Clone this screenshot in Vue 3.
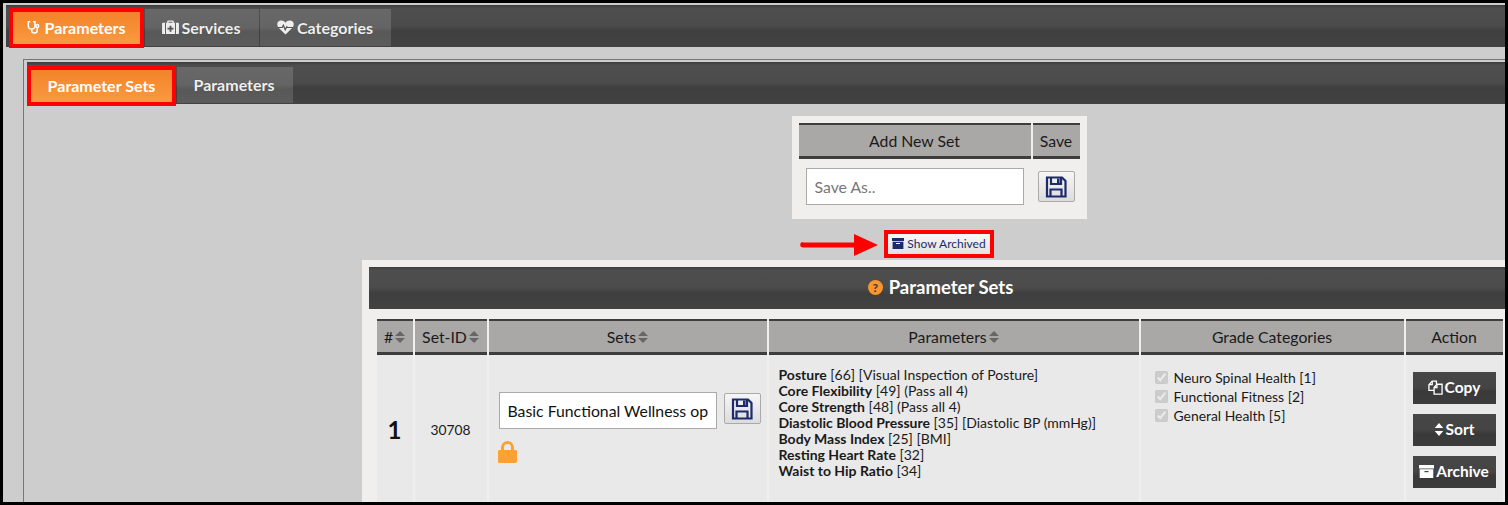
<script setup>
const params = [
  ['Posture', '[66] [Visual Inspection of Posture]'],
  ['Core Flexibility', '[49] (Pass all 4)'],
  ['Core Strength', '[48] (Pass all 4)'],
  ['Diastolic Blood Pressure', '[35] [Diastolic BP (mmHg)]'],
  ['Body Mass Index', '[25] [BMI]'],
  ['Resting Heart Rate', '[32]'],
  ['Waist to Hip Ratio', '[34]'],
]
const grades = ['Neuro Spinal Health [1]', 'Functional Fitness [2]', 'General Health [5]']
</script>

<template>
  <div class="frame">
    <div class="bar top-bar">
      <div class="tab active main-active">
        <svg class="ic" viewBox="0 0 16 16" width="14" height="15" fill="none" stroke="#fff" stroke-width="1.7" stroke-linecap="round">
          <path d="M3 1.500H1.500V6a3.800 3.800 0 0 0 7.600 0V1.500H7.600" />
          <path d="M5.300 9.800v1.400a3.200 3.200 0 0 0 6.400 0V8.200" />
          <circle cx="11.700" cy="6.200" r="1.700" />
        </svg>
        <span>Parameters</span>
      </div>
      <div class="tab services">
        <svg class="ic" viewBox="0 0 18 16" width="17" height="15">
          <path fill="#eee" d="M5.500 3V1.600C5.500.9 6 .5 6.700.5h4.600c.7 0 1.200.4 1.200 1.100V3H17c.6 0 1 .5 1 1v10c0 .6-.4 1-1 1H1c-.6 0-1-.4-1-1V4c0-.5.4-1 1-1h4.500zm1.400 0h4.200V1.900H6.900V3z" />
          <path fill="#555" d="M3.200 3h1v12h-1zM13.800 3h1v12h-1zM8 6h2v2.200h2.200v2H10v2.200H8v-2.200H5.800v-2H8z" />
        </svg>
        <span>Services</span>
      </div>
      <div class="tab categories">
        <svg class="ic" viewBox="0 0 18 16" width="17" height="15">
          <path fill="#eee" d="M9 15.500 1.900 8.600C-.6 6-.2 2.300 2.300 1.100 4.700 0 7.500.8 9 3c1.500-2.200 4.300-3 6.700-1.900 2.500 1.200 2.900 4.900.4 7.500z" />
          <path fill="none" stroke="#555" stroke-width="1.300" d="M1 8h4.500l1.200-2.500 2 5 1.600-3.300.9.800H17" />
        </svg>
        <span>Categories</span>
      </div>
    </div>

    <div class="panel">
      <div class="bar sub-bar">
        <div class="tab active sub-active"><span>Parameter Sets</span></div>
        <div class="tab sub-tab"><span>Parameters</span></div>
      </div>

      <div class="content">
        <div class="add-card">
          <div class="add-head">
            <div class="th add-name">Add New Set</div>
            <div class="th add-save">Save</div>
          </div>
          <div class="add-row">
            <div class="field add-field placeholder">Save As..</div>
            <button class="save-btn">
              <svg viewBox="0 0 24 24" width="24" height="24" fill="none" stroke="#1c2b6b" stroke-width="2.200">
                <path d="M3 2.500h15l3.500 3.500v15.500H3z" />
                <path d="M7 2.500v6.500h10V2.500" />
                <path d="M6.500 21.500v-7h11v7" />
                <rect x="13" y="3.500" width="2.500" height="4.500" fill="#1c2b6b" stroke="none" />
              </svg>
            </button>
          </div>
        </div>

        <div class="archived-wrap">
          <svg class="arrow" viewBox="0 0 78 24" width="78" height="24">
            <path fill="#f00" d="M3 9.500h51V1l24 11-24 11v-8.500H3a2.750 2.750 0 0 1 0-5.500z" />
          </svg>
          <div class="archived-outline">
            <button class="archived-btn">
              <svg viewBox="0 0 12 11" width="12" height="11">
                <path fill="#1c2b6b" d="M0 0h12v3H0zM.6 3.700h10.800V11H.6z" />
                <rect x="4" y="5" width="4" height="1" fill="#fff" />
              </svg>
              <span>Show Archived</span>
            </button>
          </div>
        </div>

        <div class="sets-card">
          <div class="bar title-bar">
            <span class="help">?</span>
            <span class="title">Parameter Sets</span>
          </div>
          <div class="grid">
            <div class="th">#<i class="sort"></i></div>
            <div class="th">Set-ID<i class="sort"></i></div>
            <div class="th">Sets<i class="sort"></i></div>
            <div class="th">Parameters<i class="sort"></i></div>
            <div class="th">Grade Categories</div>
            <div class="th">Action</div>

            <div class="td td-center num">1</div>
            <div class="td td-center setid">30708</div>
            <div class="td set-cell">
              <div class="set-row">
                <div class="field set-field">Basic Functional Wellness op</div>
                <button class="save-btn">
                  <svg viewBox="0 0 24 24" width="24" height="24" fill="none" stroke="#1c2b6b" stroke-width="2.200">
                    <path d="M3 2.500h15l3.500 3.500v15.500H3z" />
                    <path d="M7 2.500v6.500h10V2.500" />
                    <path d="M6.500 21.500v-7h11v7" />
                    <rect x="13" y="3.500" width="2.500" height="4.500" fill="#1c2b6b" stroke="none" />
                  </svg>
                </button>
              </div>
              <svg class="lock" viewBox="0 0 19 22" width="19" height="22">
                <path fill="#ffa033" d="M3 9V6.500a6.500 6.500 0 0 1 13 0V9h1.500c.8 0 1.500.7 1.500 1.500v10c0 .8-.7 1.500-1.500 1.500h-16C.7 22 0 21.300 0 20.500v-10C0 9.700.7 9 1.500 9H3zm3 0h7V6.500a3.500 3.500 0 0 0-7 0V9z" />
              </svg>
            </div>
            <div class="td param-cell">
              <div v-for="p in params" :key="p[0]" class="param"><b>{{ p[0] }}</b> {{ p[1] }}</div>
            </div>
            <div class="td grade-cell">
              <label v-for="g in grades" :key="g" class="grade">
                <input type="checkbox" checked disabled />
                <span>{{ g }}</span>
              </label>
            </div>
            <div class="td action-cell">
              <button class="act">
                <svg viewBox="0 0 16 16" width="15" height="15" fill="none" stroke="#fff" stroke-width="1.400">
                  <path d="M6.500 11H1V5l3.500-3.800H9v3" />
                  <path d="M4.500 1.500V5H1" />
                  <path d="M6.500 15V8l3-3.500H15V15z" />
                  <path d="M9.500 4.500V8h-3" />
                </svg>
                <span>Copy</span>
              </button>
              <button class="act">
                <svg viewBox="0 0 10 16" width="10" height="15" fill="#fff">
                  <path d="M5 1l4.500 5.500H.5zM5 15 .5 9.500h9z" />
                </svg>
                <span>Sort</span>
              </button>
              <button class="act">
                <svg viewBox="0 0 15 13" width="15" height="13">
                  <path fill="#fff" d="M0 0h15v3.500H0zM.7 4.300h13.600V13H.7z" />
                  <rect x="5.500" y="6" width="4" height="1.200" fill="#444" />
                </svg>
                <span>Archive</span>
              </button>
            </div>
          </div>
        </div>
      </div>
    </div>
  </div>
</template>

<style scoped>
.frame {
  box-sizing: border-box;
  width: 1508px;
  height: 505px;
  border: 3px solid #000;
  padding: 2px 0 0 3px;
  background: #cdcdcd;
  overflow: hidden;
  font-family: Lato, sans-serif;
  color: #1a1a1a;
}
.bar {
  background: linear-gradient(#3c3c3c 0, #4e4e4e 8%, #4c4c4c 48%, #3f3f3f 62%, #424242 100%);
}
.top-bar {
  display: flex;
  align-items: flex-start;
  height: 42px;
  padding-left: 3px;
}
.tab {
  box-sizing: border-box;
  display: flex;
  align-items: center;
  justify-content: center;
  gap: 3px;
  font-size: 16px;
  font-weight: 700;
  color: #f0f0f0;
  text-shadow: 0 0 1px rgba(0, 0, 0, .4);
  background: linear-gradient(#686868 0, #646464 50%, #585858 62%, #5c5c5c 100%);
}
.ic { flex: none; }
.active {
  border: 4px solid #f00;
  color: #fff;
  background: linear-gradient(#f3832a, #f99a40);
  text-shadow: none;
}
.main-active {
  width: 135px;
  height: 40px;
  margin-top: 3px;
  padding-bottom: 1px;
}
.services {
  width: 114px;
  height: 37px;
  margin: 4px 1px 0;
  padding-right: 2px;
}
.categories {
  width: 131px;
  height: 37px;
  margin-top: 4px;
  padding-right: 1px;
}
.panel {
  width: 1824px;
  margin: 12px 0 0 17px;
  border-top: 1px solid #777;
  border-left: 1px solid #777;
  padding: 2px 0 0 3px;
}
.sub-bar {
  display: flex;
  align-items: flex-start;
  height: 42px;
}
.sub-active {
  width: 149px;
  height: 40px;
  margin-top: 4px;
  padding-bottom: 1px;
}
.sub-tab {
  width: 116px;
  height: 36px;
  margin: 5px 0 0 1px;
  padding: 0 2px 1px 0;
}
.content {
  display: flex;
  flex-direction: column;
  align-items: center;
}
.add-card {
  box-sizing: border-box;
  width: 295px;
  height: 103px;
  margin-top: 12px;
  padding: 7px;
  background: #f0efed;
}
.add-head {
  display: grid;
  grid-template-columns: 232px 47px;
  gap: 2px;
}
.th {
  box-sizing: border-box;
  display: flex;
  align-items: center;
  justify-content: center;
  height: 36px;
  border-top: 2px solid #3d3d3d;
  border-bottom: 3px solid #3d3d3d;
  background: #a9a8a6;
  font-size: 15.800px;
  color: #1a1a1a;
}
.add-row {
  display: flex;
  align-items: flex-start;
  gap: 14px;
  padding: 9px 0 0 7px;
}
.field {
  box-sizing: border-box;
  display: flex;
  align-items: center;
  height: 37px;
  padding-left: 8px;
  border: 1px solid #aaa;
  background: #fff;
  font-size: 15.800px;
  white-space: nowrap;
  overflow: hidden;
}
.add-field { width: 218px; }
.placeholder { color: #777; }
.save-btn {
  box-sizing: border-box;
  display: flex;
  align-items: center;
  justify-content: center;
  width: 37px;
  height: 31px;
  margin-top: 3px;
  padding: 0;
  border: 1px solid #aaa;
  border-radius: 2px;
  background: linear-gradient(#f6f6f6, #dcdcdc);
}
.archived-wrap {
  position: relative;
  margin-top: 11px;
}
.arrow {
  position: absolute;
  left: -84px;
  top: 3px;
}
.archived-outline {
  box-sizing: border-box;
  width: 110px;
  height: 28px;
  border: 4px solid #f00;
}
.archived-btn {
  box-sizing: border-box;
  display: flex;
  align-items: center;
  justify-content: center;
  gap: 3px;
  width: 100%;
  height: 100%;
  padding: 0 0 2px;
  border: 0;
  background: linear-gradient(#f8f8f8, #e2e2e2);
  font-family: Lato, sans-serif;
  font-size: 12px;
  color: #1c2b6b;
}
.sets-card {
  box-sizing: border-box;
  flex: none;
  width: 1155px;
  height: 250px;
  margin-top: 2px;
  padding: 7px;
  background: #f0efed;
}
.title-bar {
  display: flex;
  align-items: center;
  justify-content: center;
  gap: 6px;
  height: 42px;
  padding-bottom: 2px;
  box-sizing: border-box;
}
.help {
  display: flex;
  align-items: center;
  justify-content: center;
  width: 15px;
  height: 15px;
  margin-left: 3px;
  border-radius: 50%;
  background: #f9952e;
  color: #3f3f3f;
  font-size: 12px;
  font-weight: 900;
}
.title {
  font-size: 18.500px;
  font-weight: 700;
  color: #fff;
}
.grid {
  display: grid;
  grid-template-columns: 36px 72px 278px 370px 263px 97px;
  grid-template-rows: 36px 150px;
  column-gap: 2px;
  margin: 10px 8px 0;
}
.sort {
  position: relative;
  display: inline-block;
  width: 10px;
  height: 12px;
  margin-left: 2px;
}
.sort::before,
.sort::after {
  content: "";
  position: absolute;
  left: 0;
  border-left: 5px solid transparent;
  border-right: 5px solid transparent;
}
.sort::before {
  top: 0;
  border-bottom: 5px solid #666;
}
.sort::after {
  bottom: 0;
  border-top: 5px solid #666;
}
.td { background: #e9e9e9; }
.td-center {
  display: flex;
  align-items: center;
  justify-content: center;
}
.num {
  padding-bottom: 2px;
  font-size: 24px;
  font-weight: 700;
  color: #111;
}
.setid {
  padding-bottom: 2px;
  font-size: 13.800px;
}
.set-cell { padding: 37px 0 0 10px; }
.set-row {
  display: flex;
  align-items: flex-start;
  gap: 7px;
}
.set-field {
  width: 218px;
  color: #111;
}
.set-row .save-btn { margin-top: 1px; }
.lock {
  display: block;
  margin: 12px 0 0 -1px;
}
.param-cell {
  padding: 12px 0 0 10px;
  font-size: 14px;
  line-height: 16px;
}
.param b { font-weight: 700; }
.grade-cell {
  display: flex;
  flex-direction: column;
  padding: 13px 0 0 14px;
  font-size: 13.900px;
  line-height: 19px;
}
.grade {
  display: flex;
  align-items: center;
  gap: 6px;
}
.grade input {
  width: 13px;
  height: 13px;
  margin: 0;
}
.action-cell {
  display: flex;
  flex-direction: column;
  align-items: center;
  gap: 10px;
  padding-top: 17px;
}
.act {
  box-sizing: border-box;
  display: flex;
  align-items: center;
  justify-content: center;
  gap: 2px;
  width: 83px;
  height: 32px;
  padding: 0 0 2px;
  border: 0;
  background: linear-gradient(#474747, #444 50%, #393939 62%, #3c3c3c);
  font-family: Lato, sans-serif;
  font-size: 15.500px;
  font-weight: 700;
  color: #fff;
}
</style>
